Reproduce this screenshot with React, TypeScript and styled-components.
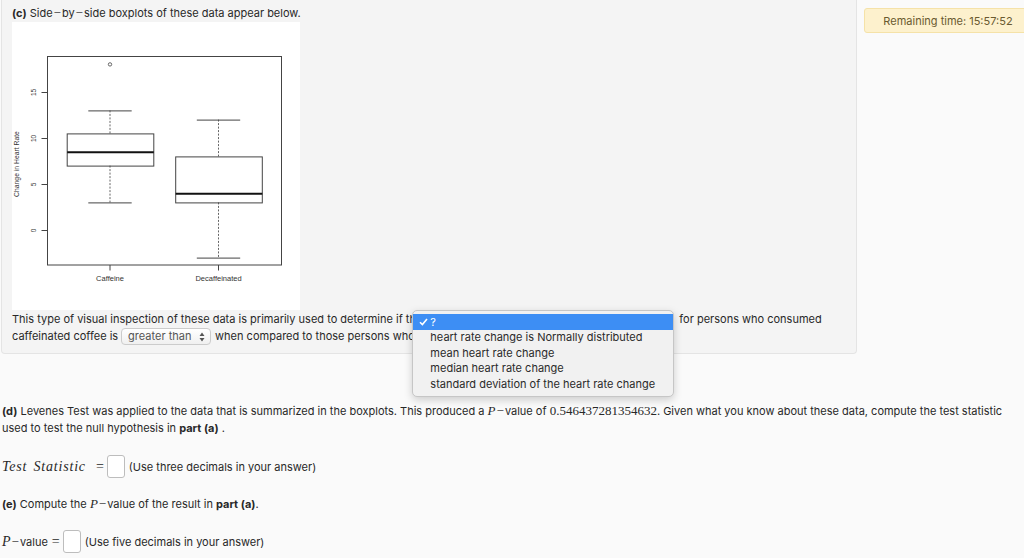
import styled, { createGlobalStyle } from "styled-components";

const GlobalStyle = createGlobalStyle`
  html, body {
    margin: 0;
    padding: 0;
    background: #fafafa;
    overflow: hidden;
  }
  body {
    font-family: Inter, "Liberation Sans", Arial, sans-serif;
    font-size: 11px;
    color: #282828;
  }
`;

const Page = styled.div`
  width: 1024px;
  height: 558px;
`;

const Top = styled.div`
  display: flex;
  align-items: flex-start;
`;

const Panel = styled.div`
  flex-shrink: 0;
  box-sizing: border-box;
  width: 856px;
  margin-left: 1px;
  background: #f4f4f4;
  border: 1px solid #e4e4e4;
  border-top: none;
  border-radius: 0 0 4px 4px;
  padding: 5px 10px 8px 10px;
`;

const Para = styled.div<{ $shift?: number }>`
  line-height: 17px;
  margin-top: ${(p) => p.$shift ?? 0}px;
`;

const Figure = styled.div`
  width: 288px;
  height: 288px;
  margin-bottom: 1px;
  background: #fff;
`;

const Side = styled.div`
  flex-shrink: 0;
  margin-left: 7px;
  padding-top: 8px;
`;

const Timer = styled.div`
  box-sizing: border-box;
  width: 168px;
  height: 25px;
  display: flex;
  align-items: center;
  justify-content: center;
  background: #fdf1cd;
  border: 1px solid #f5e2a8;
  border-radius: 3px;
  color: #6a5a30;
`;

const Choice = styled.span`
  position: relative;
  display: inline-block;
  width: 249px;
  height: 17px;
  margin: 0 4px;
  vertical-align: top;
`;

const Popup = styled.div`
  position: absolute;
  top: -1px;
  right: 1px;
  width: 262px;
  box-sizing: border-box;
  padding: 3px 0 4px;
  background: #f1f1f1;
  border: 1px solid #c6c6c6;
  border-radius: 5px;
  box-shadow: 0 3px 8px rgba(0, 0, 0, 0.18);
  z-index: 10;
`;

const PopupItem = styled.div<{ $active?: boolean }>`
  display: flex;
  align-items: center;
  height: ${(p) => (p.$active ? "16px" : "15.6px")};
  padding-left: 6px;
  background: ${(p) => (p.$active ? "#3d8ef4" : "transparent")};
  color: ${(p) => (p.$active ? "#fff" : "#2a2a2a")};
`;

const Check = styled.span`
  width: 11px;
  display: inline-flex;
`;

const Compare = styled.span`
  display: inline-flex;
  align-items: center;
  justify-content: space-between;
  box-sizing: border-box;
  width: 90px;
  height: 17px;
  margin: 0 4px 0 3px;
  padding: 0 5px 0 6px;
  vertical-align: top;
  background: linear-gradient(#ffffff, #f0f0f0);
  border: 1px solid #cccccc;
  border-radius: 4px;
  color: #555;
`;

const Lower = styled.div`
  display: flex;
  flex-direction: column;
  gap: 18px;
  margin-top: 49px;
  padding-left: 2px;
  width: 1012px;
`;

const MathI = styled.span<{ $size?: number }>`
  font-family: "Liberation Serif", "DejaVu Serif", serif;
  font-style: italic;
  font-size: ${(p) => p.$size ?? 13}px;
  line-height: 1;
`;

const MathR = styled.span`
  font-family: "Liberation Serif", "DejaVu Serif", serif;
  font-size: 13px;
  line-height: 1;
`;

const Minus = styled.span`
  font-family: "Liberation Serif", "DejaVu Serif", serif;
  font-size: 13px;
  line-height: 1;
  margin: 0 1px;
`;

const Words = styled(MathI)`
  letter-spacing: 0.8px;
  word-spacing: 2px;
`;

const AnswerRow = styled.div<{ $shift?: number }>`
  display: flex;
  align-items: center;
  height: 23px;
  margin-top: ${(p) => p.$shift ?? 0}px;
`;

const Eq = styled.span<{ $gap?: number }>`
  font-family: "Liberation Serif", "DejaVu Serif", serif;
  font-size: 14px;
  line-height: 1;
  margin: 0 3px 0 ${(p) => p.$gap ?? 3}px;
`;

const AnswerBox = styled.span`
  box-sizing: border-box;
  width: 18px;
  height: 23px;
  background: #fff;
  border: 1px solid #bdbdbd;
  border-radius: 3px;
  margin-right: 4px;
`;

const Arrows = () => (
  <svg width="6" height="10" viewBox="0 0 6 10">
    <path d="M3 0.5 L5.5 4 H0.5 Z M3 9.5 L5.5 6 H0.5 Z" fill="#555" />
  </svg>
);

const CheckMark = () => (
  <svg width="9" height="8" viewBox="0 0 9 8">
    <path d="M1 4.2 L3.4 6.6 L8 1" stroke="#fff" strokeWidth="1.6" fill="none" />
  </svg>
);

const yv = (v: number) => 208 - 9.2 * v;

type Box = { cx: number; lo: number; q1: number; med: number; q3: number; hi: number; out?: number[] };

const boxes: Box[] = [
  { cx: 98, lo: 3, q1: 7, med: 8.5, q3: 10.5, hi: 13, out: [18] },
  { cx: 206.5, lo: -3, q1: 3, med: 4, q3: 8, hi: 12 },
];

const BoxPlot = () => (
  <svg width="288" height="288" viewBox="0 0 288 288" fontFamily="'Liberation Sans', Arial, sans-serif">
    <rect x="35.5" y="34.5" width="234" height="208.5" fill="none" stroke="#444" strokeWidth="1" />
    <line x1="35.5" x2="35.5" y1={yv(15)} y2={yv(0)} stroke="#444" />
    {[0, 5, 10, 15].map((v) => (
      <g key={v}>
        <line x1="29.5" x2="35.5" y1={yv(v) + 0.5} y2={yv(v) + 0.5} stroke="#444" />
        <text
          x="0"
          y="0"
          fontSize="6.5"
          fill="#333"
          textAnchor="middle"
          transform={`translate(23.5 ${yv(v) + 0.5}) rotate(-90)`}
        >
          {v}
        </text>
      </g>
    ))}
    <text x="0" y="0" fontSize="6.8" fill="#333" textAnchor="middle" transform="translate(6.5 142) rotate(-90)">
      Change in Heart Rate
    </text>
    {boxes.map((b) => {
      const half = 43.3;
      const cap = 21.7;
      return (
        <g key={b.cx}>
          <line x1={b.cx} x2={b.cx} y1={yv(b.hi)} y2={yv(b.q3)} stroke="#666" strokeDasharray="2 1.5" />
          <line x1={b.cx} x2={b.cx} y1={yv(b.q1)} y2={yv(b.lo)} stroke="#666" strokeDasharray="2 1.5" />
          <line x1={b.cx - cap} x2={b.cx + cap} y1={yv(b.hi) + 0.5} y2={yv(b.hi) + 0.5} stroke="#444" />
          <line x1={b.cx - cap} x2={b.cx + cap} y1={yv(b.lo) + 0.5} y2={yv(b.lo) + 0.5} stroke="#444" />
          <rect
            x={b.cx - half + 0.5}
            y={yv(b.q3) + 0.5}
            width={half * 2}
            height={yv(b.q1) - yv(b.q3)}
            fill="none"
            stroke="#444"
          />
          <line x1={b.cx - half + 0.5} x2={b.cx + half + 0.5} y1={yv(b.med) + 0.5} y2={yv(b.med) + 0.5} stroke="#111" strokeWidth="2" />
          {b.out?.map((o) => (
            <circle key={o} cx={b.cx} cy={yv(o)} r="1.7" fill="none" stroke="#444" strokeWidth="0.8" />
          ))}
          <line x1={b.cx} x2={b.cx} y1="243" y2="248.5" stroke="#444" />
        </g>
      );
    })}
    <text x="98" y="258.5" fontSize="7.5" fill="#333" textAnchor="middle">Caffeine</text>
    <text x="206.5" y="258.5" fontSize="7.5" fill="#333" textAnchor="middle">Decaffeinated</text>
  </svg>
);

const options = [
  "heart rate change is Normally distributed",
  "mean heart rate change",
  "median heart rate change",
  "standard deviation of the heart rate change",
];

export default function App() {
  return (
    <Page>
      <GlobalStyle />
      <Top>
        <Panel>
          <Para>
            <b>(c)</b> Side<Minus>−</Minus>by<Minus>−</Minus>side boxplots of these data appear below.
          </Para>
          <Figure>
            <BoxPlot />
          </Figure>
          <Para>
            This type of visual inspection of these data is primarily used to determine if the
            <Choice>
              <Popup>
                <PopupItem $active>
                  <Check>
                    <CheckMark />
                  </Check>
                  ?
                </PopupItem>
                {options.map((o) => (
                  <PopupItem key={o}>
                    <Check />
                    {o}
                  </PopupItem>
                ))}
              </Popup>
            </Choice>
            for persons who consumed caffeinated coffee is
            <Compare>
              greater than <Arrows />
            </Compare>
            when compared to those persons who did not consume caffeinated coffee.
          </Para>
        </Panel>
        <Side>
          <Timer>Remaining time: 15:57:52</Timer>
        </Side>
      </Top>
      <Lower>
        <Para>
          <b>(d)</b> Levenes Test was applied to the data that is summarized in the boxplots. This produced a{" "}
          <MathI>P</MathI>
          <Minus>−</Minus>value of <MathR>0.546437281354632</MathR>. Given what you know about these data, compute
          the test statistic used to test the null hypothesis in <b>part (a)</b> .
        </Para>
        <AnswerRow>
          <Words $size={14}>Test Statistic</Words>
          <Eq $gap={10}>=</Eq>
          <AnswerBox />
          <span>(Use three decimals in your answer)</span>
        </AnswerRow>
        <Para>
          <b>(e)</b> Compute the <MathI>P</MathI>
          <Minus>−</Minus>value of the result in <b>part (a)</b>.
        </Para>
        <AnswerRow $shift={-1}>
          <MathI $size={14}>P</MathI>
          <Minus>−</Minus>
          <span>value</span>
          <Eq $gap={4}>=</Eq>
          <AnswerBox />
          <span>(Use five decimals in your answer)</span>
        </AnswerRow>
      </Lower>
    </Page>
  );
}
